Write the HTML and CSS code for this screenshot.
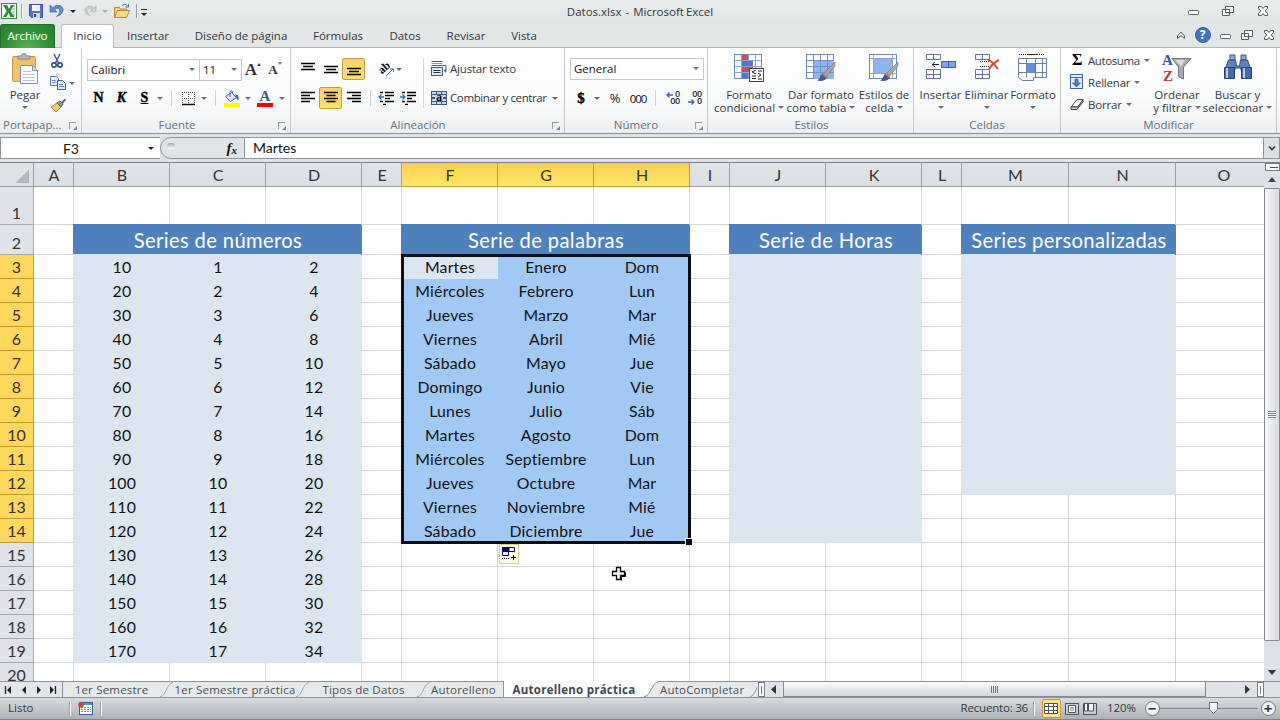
FILE: index.html
```html
<!DOCTYPE html>
<html lang="es">
<head>
    <meta charset="UTF-8">
    <title>Datos.xlsx - Microsoft Excel</title>
    <link rel="stylesheet" href="styles.css">
</head>
<body>
    <div class="window">
        <header class="titlebar">
            <div class="quick">
                <svg width="18" height="18" viewBox="0 0 18 18"><rect x="1.500" y="1.500" width="15" height="15" fill="#f4faf3" stroke="#3d8744"/><path d="M12 4h3M12 7h3M12 10h3M12 13h3" stroke="#7db581"/><path d="M3 3h4l2 4 2-4h3L10.500 9l4 6H10.500L8.500 11l-2 4H3l3.700-6z" fill="#2d8a3a"/></svg>
                <i class="vline"></i>
                <svg width="16" height="16" viewBox="0 0 16 16"><path d="M1.500 1.500h13v13h-11l-2-2z" fill="#5a72cf" stroke="#3f4f9c"/><path d="M4 2h8v6H4z" fill="#eef3fb"/><path d="M5 10h7v5H5z" fill="#cfd6e4"/><path d="M6 11h2v3H6z" fill="#2f3e85"/></svg>
                <svg width="16" height="16" viewBox="0 0 16 16"><path d="M1 2v7h7L5.800 6.700C8 4.500 11 5 10.800 8c-.2 2.500-1.800 4-3.300 5.500C11 12.500 14 10.500 14 7 14 2.500 8 .5 3.800 4.600z" fill="#5f8fd0" stroke="#3c67ad" stroke-width=".7"/></svg>
                <i class="arrow dark"></i>
                <svg width="14" height="14" viewBox="0 0 16 16"><path d="M15 2v7H8l2.200-2.300C8 4.500 5 5 5.200 8c.2 2.500 1.800 4 3.300 5.500C5 12.500 2 10.500 2 7c0-4.500 6-6.500 10.200-2.400z" fill="#c8ccd0" stroke="#b1b6bb" stroke-width=".7"/></svg>
                <i class="arrow pale"></i>
                <svg width="18" height="16" viewBox="0 0 18 16"><path d="M1.500 14.500v-10h5l1 1.500h6v3" fill="#f3cf76" stroke="#b78a35"/><path d="M1.500 14.500l3-7h12l-3 7z" fill="#fbdc8b" stroke="#b78a35"/><path d="M9 3c2-2.500 4-2 5.500 0M15.500 1v3h-3" fill="none" stroke="#4472b8"/></svg>
                <i class="vline"></i>
                <span class="customize"><i class="arrow dark"></i></span>
            </div>
            <h1>Datos.xlsx&nbsp; -&nbsp; Microsoft Excel</h1>
            <div class="winbtns top">
                <svg width="12" height="12"><rect x="1.500" y="5.500" width="10" height="4" rx="1" fill="#fff" stroke="#555c64"/></svg>
                <svg width="13" height="12"><path d="M4.500 1.500h8v6h-8zM1.500 4.500h7v6h-7z" fill="#fff" stroke="#555c64"/><path d="M4 7.500h2.500" stroke="#555c64"/></svg>
                <svg width="12" height="12"><path d="M1.500 1.500h3L6 3.500l1.500-2h3v2L8.200 6l2.300 2.500v2h-3L6 8.500l-1.500 2h-3v-2L3.800 6 1.500 3.500z" fill="#fff" stroke="#555c64"/></svg>
            </div>
        </header>

        <nav class="tabs">
            <span class="tab file">Archivo</span>
            <span class="tab active">Inicio</span>
            <span class="tab">Insertar</span>
            <span class="tab">Diseño de página</span>
            <span class="tab">Fórmulas</span>
            <span class="tab">Datos</span>
            <span class="tab">Revisar</span>
            <span class="tab">Vista</span>
            <div class="winbtns">
                <svg width="10" height="10"><path d="M1.500 6L5 2l3.500 4v2.500L5 5.500 1.500 8.500z" fill="#fff" stroke="#555c64"/></svg>
                <span class="help">?</span>
                <svg width="12" height="12"><rect x="1.500" y="5.500" width="10" height="4" rx="1" fill="#fff" stroke="#555c64"/></svg>
                <svg width="13" height="12"><path d="M4.500 1.500h8v6h-8zM1.500 4.500h7v6h-7z" fill="#fff" stroke="#555c64"/><path d="M4 7.500h2.500" stroke="#555c64"/></svg>
                <svg width="12" height="12"><path d="M1.500 1.500h3L6 3.500l1.500-2h3v2L8.200 6l2.300 2.500v2h-3L6 8.500l-1.500 2h-3v-2L3.800 6 1.500 3.500z" fill="#fff" stroke="#555c64"/></svg>
            </div>
        </nav>

        <div class="ribbon">
            <section class="group clipboard">
                <div class="tools">
                    <div class="big">
                        <svg width="28" height="32" viewBox="0 0 28 32"><rect x="1.500" y="3.500" width="23" height="25" rx="1" fill="#f1c26c" stroke="#c9984a"/><path d="M7 6V3h3.500a2.500 2.500 0 0 1 5 0H19v3z" fill="#b7bcc4" stroke="#7c838d"/><path d="M9.500 12.500h12l5 5v13h-17z" fill="#fafcff" stroke="#7d8db5"/><path d="M21.500 12.500v5h5" fill="#d5def0" stroke="#7d8db5"/><path d="M12 18.500h8M12 21.500h12M12 24.500h12M12 27.500h12" stroke="#b7c5e3"/></svg>
                        <span>Pegar</span>
                        <i class="arrow"></i>
                    </div>
                    <div class="clip-col">
                        <svg width="14" height="16" viewBox="0 0 14 16"><path d="M4 1l4.500 9M10 1L5.500 10" stroke="#48608f" stroke-width="1.600"/><circle cx="4" cy="12" r="2.200" fill="none" stroke="#2d4f9e" stroke-width="1.700"/><circle cx="10" cy="12" r="2.200" fill="none" stroke="#2d4f9e" stroke-width="1.700"/></svg>
                        <div><svg width="16" height="14" viewBox="0 0 16 14"><path d="M.5.500h6l2 2v7h-8z" fill="#eaf1fc" stroke="#5577b5"/><path d="M2 4.500h4M2 6.500h4" stroke="#6f92cc"/><path d="M7.500 4.500h5l3 3v6h-8z" fill="#dfeafa" stroke="#3a5ea5"/><path d="M9 8.500h4M9 10.500h5" stroke="#5279bd"/></svg><i class="arrow"></i></div>
                        <svg width="17" height="15" viewBox="0 0 17 15"><path d="M1 9l6-4 4 4-5 5z" fill="#f3cb6a" stroke="#b58b34"/><path d="M7 5l3-2 3 3-2 3z" fill="#8a93a8" stroke="#5c657a"/><path d="M11.500 4L15 .8l1 1L13 5.500z" fill="#4a4f74"/></svg>
                    </div>
                </div>
                <footer>Portapap...<i class="launcher"></i></footer>
            </section>

            <section class="group font">
                <div class="tools stack">
                    <div class="row font-top">
                        <span class="combo">Calibri<i class="arrow"></i></span>
                        <span class="combo size">11<i class="arrow"></i></span>
                        <span class="grow">A<i class="up"></i></span>
                        <span class="grow shrink">A<i class="arrow"></i></span>
                    </div>
                    <div class="row font-bottom">
                        <b class="serif">N</b>
                        <b class="serif"><em>K</em></b>
                        <b class="serif"><u>S</u></b>
                        <i class="arrow"></i>
                        <i class="sep"></i>
                        <svg width="15" height="15" viewBox="0 0 15 15"><path d="M1 1.500h13M1 7.500h13M1.500 1v12M7.500 1v12M13.500 1v12" stroke="#555" stroke-dasharray="1 1"/><path d="M1 13.500h13" stroke="#111" stroke-width="1.500"/></svg>
                        <i class="arrow"></i>
                        <i class="sep"></i>
                        <svg width="18" height="17" viewBox="0 0 18 17"><path d="M2.500 6.500l6-4 5 5-6 4z" fill="#dce8f8" stroke="#4b6794"/><path d="M7 7V1.500c1.500-1.300 3-.5 2.500 2" fill="none" stroke="#4b6794"/><path d="M12 4.500c4 0 4 3 3.500 6-1.500-1-2.500-2-2-3z" fill="#3b66b4"/><rect x="1" y="13" width="16" height="4" fill="#ff0"/></svg>
                        <i class="arrow"></i>
                        <span class="fontcolor">A</span>
                        <i class="arrow"></i>
                    </div>
                </div>
                <footer>Fuente<i class="launcher"></i></footer>
            </section>

            <section class="group align">
                <div class="tools stack">
                    <div class="row align-top">
                        <span class="btn"><svg width="14" height="14"><path d="M0 1.500h14M2 4.500h10M0 7.500h14" stroke="#000" stroke-width="1.300"/></svg></span>
                        <span class="btn"><svg width="14" height="14"><path d="M0 4.500h14M2 7.500h10M0 10.500h14" stroke="#000" stroke-width="1.300"/></svg></span>
                        <span class="btn on"><svg width="14" height="14"><path d="M0 6.500h14M2 9.500h10M0 12.500h14" stroke="#000" stroke-width="1.300"/></svg></span>
                        <i></i>
                        <svg class="orient" width="18" height="16" viewBox="0 0 18 16"><text x="0" y="10" transform="rotate(-42 6 8)" class="ab">ab</text><path d="M7 15l7-7M11 8h3.500v3" fill="none" stroke="#667"/></svg>
                        <i class="arrow"></i>
                    </div>
                    <div class="row align-bottom">
                        <span class="btn"><svg width="14" height="14"><path d="M0 1.500h14M0 4.500h9M0 7.500h14M0 10.500h9" stroke="#000" stroke-width="1.300"/></svg></span>
                        <span class="btn on"><svg width="14" height="14"><path d="M0 1.500h14M2.500 4.500h9M0 7.500h14M2.500 10.500h9" stroke="#000" stroke-width="1.300"/></svg></span>
                        <span class="btn"><svg width="14" height="14"><path d="M0 1.500h14M5 4.500h9M0 7.500h14M5 10.500h9" stroke="#000" stroke-width="1.300"/></svg></span>
                        <i class="sep"></i>
                        <svg width="16" height="14"><path d="M2 1.500h3M7 1.500h9M7 4.500h9M7 7.500h5M2 10.500h3M7 10.500h9M5 13.500h3" stroke="#000" stroke-width="1.600"/><path d="M6 6H1M3.500 3.500L1 6l2.500 2.500" fill="none" stroke="#3b66b4" stroke-width="1.300"/></svg>
                        <svg width="16" height="14"><path d="M2 1.500h3M7 1.500h9M7 4.500h9M7 7.500h5M2 10.500h3M7 10.500h9M5 13.500h3" stroke="#000" stroke-width="1.600"/><path d="M0 6h5M2.500 3.500L5 6 2.500 8.500" fill="none" stroke="#3b66b4" stroke-width="1.300"/></svg>
                    </div>
                </div>
                <div class="wrap-col">
                    <div><svg width="17" height="16" viewBox="0 0 17 16"><path d="M.5.500h11M.5 4.500h14.500v6" fill="none" stroke="#4a5a78"/><path d="M.5 2.500h11" stroke="#8d9ab3"/><rect x=".5" y="6.500" width="11" height="8" fill="#dde8f8" stroke="#4a5a78"/><path d="M2.500 9.500h7M2.500 11.500h7" stroke="#333"/><path d="M12.500 9.500l2.500 2.500V7.500z" fill="#3b66b4"/></svg><span>Ajustar texto</span></div>
                    <div><svg width="17" height="15" viewBox="0 0 17 15"><rect x=".5" y=".5" width="15" height="13" fill="#c4d8f3" stroke="#3f5580"/><path d="M.5 3.500h15M.5 10.500h15M5.500.500v3M10.500.500v3M5.500 10.500v3M10.500 10.500v3" stroke="#3f5580"/><path d="M1 7h3M12 7h3" stroke="#223" stroke-width="1.500"/><text x="5.200" y="9.500" class="ab">a</text></svg><span class="merge">Combinar y centrar</span><i class="arrow"></i></div>
                </div>
                <footer>Alineación<i class="launcher"></i></footer>
            </section>

            <section class="group number">
                <div class="tools stack">
                    <div class="row"><span class="combo format">General<i class="arrow"></i></span></div>
                    <div class="row number-bottom">
                        <b class="serif dollar">$</b>
                        <i class="arrow"></i>
                        <span class="pct">%</span>
                        <span class="thousands">000</span>
                        <i class="sep"></i>
                        <span class="decimals">
                            <svg width="7" height="6"><path d="M7 3H1M3.500.500L1 3l2.500 2.500" fill="none" stroke="#3b66b4" stroke-width="1.400"/></svg><span>0</span>
                            <span class="wide">00</span>
                        </span>
                        <span class="decimals">
                            <span class="wide">00</span>
                            <svg width="7" height="6"><path d="M0 3h6M3.500.500L6 3 3.500 5.500" fill="none" stroke="#3b66b4" stroke-width="1.400"/></svg><span>0</span>
                        </span>
                    </div>
                </div>
                <footer>Número<i class="launcher"></i></footer>
            </section>

            <section class="group styles">
                <div class="tools">
                    <div class="big">
                        <svg width="30" height="30" viewBox="0 0 30 30"><rect x=".5" y="1.500" width="27" height="24" fill="#fff" stroke="#6d88bd"/><path d="M7.500 1.500v24M14.500 1.500v24M21.500 1.500v24M.5 7.500h27M.5 13.500h27M.5 19.500h27" stroke="#8ba3d2"/><path d="M8 2h6v5H8zM8 14h11v5H8z" fill="#d8474a"/><path d="M8 8h11v5H8zM8 20h6v5H8z" fill="#4a78cf"/><rect x="15.500" y="15.500" width="14" height="13" fill="#fff" stroke="#444"/><path d="M22 17l-4 2 4 2M18 23h4M18 25.500h4M24 20l3 2-3 2M24 26h4M24 18h4" fill="none" stroke="#222"/></svg>
                        <span>Formato</span>
                        <span>condicional<i class="arrow"></i></span>
                    </div>
                    <div class="big">
                        <svg width="30" height="30" viewBox="0 0 30 30"><rect x=".5" y="1.500" width="27" height="24" fill="#fff" stroke="#6d88bd"/><path d="M8 8h20v18H8z" fill="#8fb4ee"/><path d="M7.500 1.500v24M14.500 1.500v24M21.500 1.500v24M.5 7.500h27M.5 13.500h27M.5 19.500h27" stroke="#7391c9"/><path d="M29 9v4l-9 11-3-3z" fill="#a3a7ae" stroke="#6e737c" stroke-width=".6"/><path d="M17 20l4 4c-1 4-6 4.500-10 3.500 3-1 3-5 6-7.500z" fill="#3a5c9c"/><path d="M17.500 19.500l4 4-1.500 1.500-4-4z" fill="#cf8947"/></svg>
                        <span>Dar formato</span>
                        <span>como tabla<i class="arrow"></i></span>
                    </div>
                    <div class="big">
                        <svg width="30" height="30" viewBox="0 0 30 30"><rect x=".5" y="1.500" width="27" height="24" fill="#fff" stroke="#6d88bd"/><path d="M4.500 1.500v24M23.500 1.500v24M.5 5.500h27M.5 20.500h27" stroke="#8ba3d2"/><path d="M5 6h18v14H5z" fill="#8fb4ee"/><path d="M29 9v4l-9 11-3-3z" fill="#a3a7ae" stroke="#6e737c" stroke-width=".6"/><path d="M17 20l4 4c-1 4-6 4.500-10 3.500 3-1 3-5 6-7.500z" fill="#3a5c9c"/><path d="M17.500 19.500l4 4-1.500 1.500-4-4z" fill="#cf8947"/></svg>
                        <span>Estilos de</span>
                        <span>celda<i class="arrow"></i></span>
                    </div>
                </div>
                <footer>Estilos</footer>
            </section>

            <section class="group cells">
                <div class="tools">
                    <div class="big">
                        <svg width="30" height="30" viewBox="0 0 30 30"><path d="M.5 1.500h14v5H.5zM7.500 1.500v5M.5 16.500h14v9H.5zM7.500 16.500v9M.5 21.500h14" fill="#fff" stroke="#5c7299"/><rect x="15.500" y="8.500" width="14" height="6" fill="#7ba4ea" stroke="#3d62a8"/><path d="M22.500 8.500v6" stroke="#3d62a8"/><path d="M13 11.500H6M9 9l-3 2.500L9 14" fill="none" stroke="#222"/></svg>
                        <span>Insertar</span>
                        <i class="arrow"></i>
                    </div>
                    <div class="big">
                        <svg width="30" height="30" viewBox="0 0 30 30"><path d="M3.500 1.500h14v5h-14zM10.500 1.500v5M3.500 16.500h14v9h-14zM10.500 16.500v9M3.500 21.500h14" fill="#fff" stroke="#5c7299"/><path d="M8 8.500h10M8 13.500h10" stroke="#333" stroke-dasharray="1 1"/><path d="M16 6c3 2 7 6 10 10M27 7c-4 2-8 6-10 9" fill="none" stroke="#d9483c" stroke-width="2"/></svg>
                        <span>Eliminar</span>
                        <i class="arrow"></i>
                    </div>
                    <div class="big">
                        <svg width="30" height="30" viewBox="0 0 30 30"><path d="M1 1.500h26" stroke="#222" stroke-dasharray="1 1"/><path d="M10 1.500h9" stroke="#222"/><path d="M.5 5.500h28v19h-13v3h-11l-4-3zM8.500 5.500v19M17.500 5.500v19M24.500 5.500v19M.5 10.500h28M.5 19.500h28" fill="#f6f9fe" stroke="#6c7f9f"/><rect x="9" y="10" width="8" height="10" fill="#5f8de0"/></svg>
                        <span>Formato</span>
                        <i class="arrow"></i>
                    </div>
                </div>
                <footer>Celdas</footer>
            </section>

            <section class="group edit">
                <div class="tools">
                    <div class="edit-col">
                        <div><b class="sigma">Σ</b><span>Autosuma</span><i class="arrow"></i></div>
                        <div><svg width="14" height="16" viewBox="0 0 14 16"><rect x=".5" y=".5" width="12" height="14" fill="#e3edfb" stroke="#3b66b4"/><path d="M1 3.500h11" stroke="#3b66b4"/><path d="M5 5h3v4h2.500L6.500 13 2.500 9H5z" fill="#4a7ad0" stroke="#2f57a5" stroke-width=".7"/></svg><span>Rellenar</span><i class="arrow"></i></div>
                        <div><svg width="14" height="13" viewBox="0 0 14 13"><path d="M1 9l6-7.500h6L8 9z" fill="#fff" stroke="#444"/><path d="M1 9v2.500h6L13 4V1.500L8 9z" fill="#ccd3dd" stroke="#444"/></svg><span>Borrar</span><i class="arrow"></i></div>
                    </div>
                    <div class="big">
                        <svg class="sort" width="30" height="30" viewBox="0 0 30 30"><path d="M10 5.500h19L21.500 14v12l-5-2.500V14z" fill="#a9adb2" stroke="#73777d"/><path d="M13 7h10l-4 6z" fill="#dcdfe2"/><text x="0" y="12" class="sort-a">A</text><text x="1" y="28" class="sort-z">Z</text></svg>
                        <span>Ordenar</span>
                        <span>y filtrar<i class="arrow"></i></span>
                    </div>
                    <div class="big">
                        <svg width="30" height="30" viewBox="0 0 30 30"><path d="M7 2h5v5H7zM18 2h5v5h-5z" fill="#92abd3" stroke="#3d5788"/><path d="M5.500 7h7l1 6h3l1-6h7l2.500 7v3h-9v-2h-6v2h-9v-3z" fill="#5f82bd" stroke="#314c80"/><path d="M1.500 14.500h10v11h-10zM18.500 14.500h10v11h-10z" fill="#4569ab" stroke="#27417a"/><path d="M4 15v10M21 15v10" stroke="#b7caea" stroke-width="2"/></svg>
                        <span>Buscar y</span>
                        <span>seleccionar<i class="arrow"></i></span>
                    </div>
                </div>
                <footer>Modificar</footer>
            </section>
        </div>

        <div class="formula-bar">
            <div class="name-box"><span>F3</span><i class="arrow dark"></i></div>
            <div class="fx"><i class="knob"></i><span><em>f</em><sub>x</sub></span></div>
            <div class="formula">Martes</div>
            <div class="expand"><svg width="8" height="7"><path d="M1 1.500l3 3 3-3" fill="none" stroke="#333" stroke-width="1.600"/></svg></div>
        </div>

        <main class="work">
            <div class="sheet" id="sheet">
                <div class="selection"></div>
                <div class="paste-tag"><svg width="15" height="15"><path d="M1 1h7v5H1z" fill="#000080"/><path d="M8 1.500h5.500v4H8zM1.500 5.500h6v4h-6z" fill="#fff" stroke="#000080"/><path d="M1 12.500h8" stroke="#000" stroke-dasharray="1 1"/><path d="M10 11.500h5M12.500 9v5" stroke="#000"/></svg></div>
                <svg class="cursor" width="16" height="16"><path d="M5.500 1.500h4v4h4v4h-4v4h-4v-4h-4v-4h4z" fill="#fff" stroke="#000" stroke-width="1.300"/><path d="M10.500 14.500v-4h4v-4" fill="none" stroke="#000"/></svg>
            </div>
            <div class="vscroll">
                <div class="split"></div>
                <div class="end"><i class="up"></i></div>
                <div class="thumb"><i class="grip"></i></div>
                <div class="track"></div>
                <div class="end"><i class="arrow"></i></div>
            </div>
        </main>

        <div class="bottom">
            <div class="nav">
                <svg width="9" height="8"><path d="M1.500 0v8" stroke="#222" stroke-width="1.300"/><path d="M7 0v8L3 4z" fill="#222"/></svg>
                <svg width="6" height="8"><path d="M5 0v8L1 4z" fill="#222"/></svg>
                <svg width="6" height="8"><path d="M1 0v8l4-4z" fill="#222"/></svg>
                <svg width="9" height="8"><path d="M6.500 0v8" stroke="#222" stroke-width="1.300"/><path d="M1 0v8l4-4z" fill="#222"/></svg>
            </div>
            <div class="sheet-tabs">
                <span class="s1">1er Semestre</span>
                <svg width="14" height="15"><path d="M0 14.500c3 0 4-2 6-6S9 1.500 13 .5" fill="none" stroke="#9ea4aa"/></svg>
                <span class="s2">1er Semestre práctica</span>
                <svg width="14" height="15"><path d="M0 14.500c3 0 4-2 6-6S9 1.500 13 .5" fill="none" stroke="#9ea4aa"/></svg>
                <span class="s3">Tipos de Datos</span>
                <svg width="14" height="15"><path d="M0 14.500c3 0 4-2 6-6S9 1.500 13 .5" fill="none" stroke="#9ea4aa"/></svg>
                <span class="s4">Autorelleno</span>
                <span class="s5 current">Autorelleno práctica</span>
                <svg class="edge" width="16" height="16"><path d="M0 0h15c-3 1-5 3-7 7s-4 8-8 8z" fill="#fff"/><path d="M0 15.500c3 0 5-3 7.500-7.500S11 1.500 15 .5" fill="none" stroke="#888e95"/></svg>
                <span class="s6">AutoCompletar</span>
                <svg width="8" height="15"><path d="M0 14.500c3 0 5-4 7-9" fill="none" stroke="#888e95"/></svg>
            </div>
            <div class="hscroll">
                <i class="hsplit"></i>
                <div class="hend"><svg width="6" height="9"><path d="M5 0v9L0 4.500z" fill="#333"/></svg></div>
                <div class="hthumb"><i></i><i></i><i></i><i></i></div>
                <div class="htrack"><svg width="6" height="9"><path d="M0 0v9l5-4.500z" fill="#333"/></svg></div>
                <i class="hsplit"></i>
            </div>
        </div>

        <footer class="status">
            <span class="ready">Listo</span>
            <i class="vline"></i>
            <svg width="16" height="15" viewBox="0 0 16 15"><rect x="1.500" y="1.500" width="13" height="12" fill="#fff" stroke="#3b5f9f"/><path d="M2 2h12v2H2z" fill="#5c8ad6"/><path d="M3 6.500h10M3 8.500h10M3 10.500h10" stroke="#6f8cbc" stroke-dasharray="2 1"/><circle cx="3" cy="4" r="2.800" fill="#b5533a"/></svg>
            <i class="vline"></i>
            <span class="count">Recuento: 36</span>
            <i class="vline"></i>
            <span class="view on"><svg width="14" height="12"><path d="M.5.500h13v10H.5zM4.500.500v10M9.500.500v10M.5 3.500h13M.5 7.500h13" fill="#fff" stroke="#4f5256"/></svg></span>
            <span class="view"><svg width="14" height="12"><path d="M.5.500h13v11H.5z" fill="#c9cdd1" stroke="#4f5256"/><path d="M3.500 2.500h7v7h-7z" fill="#fff" stroke="#4f5256"/><path d="M5 5h4M5 7h4" stroke="#777"/></svg></span>
            <span class="view"><svg width="14" height="12"><path d="M.5.500h13v11H.5z" fill="#c9cdd1" stroke="#4f5256"/><path d="M1.500 1v7h3V1M5.500 1v7h5V1" fill="#fff" stroke="#4f5256"/></svg></span>
            <span class="zoom">120%</span>
            <span class="round">−</span>
            <span class="slider"><svg width="9" height="12"><path d="M.5.500h8v7l-4 4-4-4z" fill="#f5f7f9" stroke="#6b7178"/></svg></span>
            <span class="round">+</span>
        </footer>
    </div>

    <script>
        const letters = 'ABCDEFGHIJKLMNO'.split('');
        const dias = ['Martes', 'Miércoles', 'Jueves', 'Viernes', 'Sábado', 'Domingo', 'Lunes', 'Martes', 'Miércoles', 'Jueves', 'Viernes', 'Sábado'];
        const meses = ['Enero', 'Febrero', 'Marzo', 'Abril', 'Mayo', 'Junio', 'Julio', 'Agosto', 'Septiembre', 'Octubre', 'Noviembre', 'Diciembre'];
        const cortos = ['Dom', 'Lun', 'Mar', 'Mié', 'Jue', 'Vie', 'Sáb', 'Dom', 'Lun', 'Mar', 'Mié', 'Jue'];
        const titles = {
            B: ['Series de números', 3],
            F: ['Serie de palabras', 3],
            J: ['Serie de Horas', 2],
            M: ['Series personalizadas', 2]
        };
        const sheet = document.getElementById('sheet');

        function add(text, cls, span) {
            const el = document.createElement('div');
            el.className = cls;
            el.textContent = text;
            if (span) el.style.gridColumn = 'span ' + span;
            sheet.appendChild(el);
        }

        function value(col, i) {
            if (i < 0) return '';
            switch (col) {
                case 'B': return (i + 1) * 10;
                case 'C': return i + 1;
                case 'D': return (i + 1) * 2;
                case 'F': return dias[i] || '';
                case 'G': return meses[i] || '';
                case 'H': return cortos[i] || '';
            }
            return '';
        }

        function style(col, row) {
            if (row < 3) return '';
            if ('BCD'.includes(col) && row <= 19) return ' fill';
            if ('FGH'.includes(col) && row <= 14) return col === 'F' && row === 3 ? ' fill' : ' picked';
            if ('JK'.includes(col) && row <= 14) return ' fill';
            if ('MN'.includes(col) && row <= 12) return ' fill';
            return '';
        }

        // encabezados de columna
        add('', 'head corner');
        letters.forEach(l => add(l, 'head' + ('FGH'.includes(l) ? ' lit' : '')));

        // filas
        for (let row = 1; row <= 20; row++) {
            add(row, 'num' + (row >= 3 && row <= 14 ? ' lit' : ''));
            for (let c = 0; c < letters.length; c++) {
                const col = letters[c];
                if (row === 2 && titles[col]) {
                    add(titles[col][0], 'cell title', titles[col][1]);
                    c += titles[col][1] - 1;
                    continue;
                }
                const s = style(col, row);
                add(s ? value(col, row - 3) : '', 'cell' + s);
            }
        }
    </script>
</body>
</html>
```
FILE: styles.css
```css
* {
    box-sizing: border-box;
}

body {
    margin: 0;
    overflow: hidden;
    font-family: "Open Sans", "Noto Sans", sans-serif;
    font-size: 11.5px;
    color: #33383e;
}

svg {
    display: block;
    flex: none;
}

.window {
    width: 1280px;
    height: 720px;
    display: flex;
    flex-direction: column;
    background: #e2e6e7;
}

.arrow,
.up {
    display: block;
    flex: none;
    width: 0;
    height: 0;
    border: 3px solid transparent;
    border-top-color: #6a6f75;
    border-bottom: 0;
}

.up {
    border: 3px solid transparent;
    border-bottom-color: #444;
    border-top: 0;
}

.arrow.dark {
    border-top-color: #222;
}

.arrow.pale {
    border-top-color: #aaafb4;
}

.vline {
    width: 2px;
    height: 14px;
    border-left: 1px solid #9da3a8;
    border-right: 1px solid #f7f9fa;
}

/* barra de titulo */
.titlebar {
    height: 24px;
    display: grid;
    grid-template-columns: 500px 280px 1fr;
    background: linear-gradient(#e9eced, #e2e5e6);
}

.quick {
    display: grid;
    grid-template-columns: 18px 8px 20px 22px 9px 25px 6px 27px 4px 10px;
    align-items: center;
    justify-items: center;
    height: 22px;
}

.customize {
    border-top: 1px solid #222;
    padding-top: 3px;
    margin-top: 3px;
}

.titlebar h1 {
    margin: 0;
    font-size: 11.5px;
    font-weight: 400;
    line-height: 24px;
    text-align: center;
    word-spacing: -1px;
}

.winbtns {
    display: grid;
    grid-template-columns: 20px 23px 22px 21px 23px;
    place-items: center;
    height: 22px;
}

.winbtns.top {
    grid-template-columns: 35px 35px 35px;
    justify-content: end;
}

.help {
    width: 16px;
    height: 16px;
    border-radius: 50%;
    background: #3f76c4;
    border: 1px solid #2e5ca3;
    color: #fff;
    font-weight: 700;
    font-size: 12px;
    line-height: 14px;
    text-align: center;
}

/* pestañas */
.tabs {
    height: 24px;
    display: grid;
    grid-template-columns: 55px 64px 64px 116px 78px 56px 66px 50px 1fr;
    border-bottom: 1px solid #b3b8bc;
}

.tab {
    line-height: 24px;
    text-align: center;
}

.tab.file {
    background: radial-gradient(ellipse at 50% 110%, #5db74f, #2f8f37 60%, #23802e);
    color: #fff;
    border: 1px solid #1f6b29;
    border-bottom: 0;
    border-radius: 3px 3px 0 0;
    line-height: 22px;
    height: 24px;
}

.tab.active {
    width: 53px;
    height: 24px;
    margin-left: 6px;
    background: #fff;
    border: 1px solid #b9bec3;
    border-bottom: 0;
    border-radius: 3px 3px 0 0;
    line-height: 22px;
}

.tab:nth-child(3) {
    margin-left: -6px;
}

.tabs .winbtns {
    justify-content: end;
}

/* cinta de opciones */
.ribbon {
    height: 86px;
    display: grid;
    grid-template-columns: 82px 209px 274px 143px 206px 147px 216px;
    background: linear-gradient(#fff, #fafbfc 60%, #eceff1);
    border-bottom: 1px solid #8b9197;
}

.group {
    position: relative;
    display: grid;
    grid-template-columns: auto 1fr;
    grid-template-rows: 69px 16px;
    border-right: 1px solid #c3c8cc;
}

.group footer {
    grid-column: 1 / -1;
    line-height: 16px;
    text-align: center;
    color: #697079;
}

.clipboard footer {
    text-align: left;
    padding-left: 3px;
}

.font footer {
    padding-right: 18px;
}

.align footer {
    padding-right: 19px;
}

.launcher {
    position: absolute;
    right: 5px;
    bottom: 4px;
    width: 7px;
    height: 7px;
    border: 1px solid #969ca3;
    border-right: 0;
    border-bottom: 0;
}

.launcher::after {
    content: "";
    position: absolute;
    right: -1px;
    bottom: -1px;
    border: 2px solid transparent;
    border-right-color: #7b8289;
    border-bottom-color: #7b8289;
}

.tools {
    display: flex;
}

.tools.stack {
    display: block;
    padding: 10px 0 0 5px;
}

.big {
    display: flex;
    flex-direction: column;
    align-items: center;
    padding-top: 5px;
    white-space: nowrap;
}

.big svg {
    margin-bottom: 5px;
}

.big span {
    display: flex;
    align-items: center;
    line-height: 13px;
    height: 13px;
}

.big span .arrow {
    margin-left: 3px;
}

.big > .arrow {
    margin-top: 5px;
}

.clipboard .big {
    width: 50px;
}

.clipboard .big svg {
    margin-bottom: 3px;
}

.clip-col {
    display: grid;
    grid-template-rows: repeat(3, 22px);
    justify-items: start;
    align-items: center;
    padding-top: 2px;
}

.clip-col div {
    display: flex;
    align-items: center;
    gap: 3px;
}

.styles .tools {
    display: grid;
    grid-template-columns: 80px 64px 62px;
    padding-left: 1px;
}

.cells .tools {
    display: grid;
    grid-template-columns: 49px 43px 50px;
    padding-left: 2px;
}

.row {
    display: grid;
    align-items: center;
    height: 22px;
}

.row + .row {
    margin-top: 7px;
}

.sep {
    width: 1px;
    height: 16px;
    background: #cdd1d5;
}

.combo {
    display: flex;
    align-items: center;
    justify-content: space-between;
    height: 22px;
    padding: 0 4px 2px 3px;
    background: #fff;
    border: 1px solid #c5c9cd;
    color: #111;
}

.combo.size {
    border-left: 0;
}

.combo.format {
    width: 134px;
}

.font-top {
    grid-template-columns: 113px 42px 22px 22px;
}

.font-bottom {
    grid-template-columns: 23px 23px 23px 8px 14px 20px 12px 10px 24px 7px 28px 5px;
    justify-items: center;
}

.serif {
    font-family: "Liberation Serif", serif;
    font-size: 14px;
    color: #000;
    -webkit-text-stroke: .4px #000;
}

.grow {
    display: flex;
    justify-content: center;
    font: bold 17px/22px "Liberation Serif", serif;
    color: #333;
}

.grow .up,
.grow .arrow {
    margin-top: 4px;
    border-width: 0 2.500px 3px;
    border-bottom-color: #345;
}

.grow.shrink {
    font-size: 13px;
    line-height: 24px;
}

.grow .arrow {
    border-width: 3px 2.500px 0;
}

.fontcolor {
    width: 16px;
    height: 17px;
    border-bottom: 4px solid #f00;
    font: bold 15px/13px "Liberation Serif", serif;
    text-align: center;
    color: #3c5a8c;
}

.btn {
    display: grid;
    place-items: center;
    width: 23px;
    height: 22px;
}

.btn.on {
    background: linear-gradient(#fbd469, #ffe074);
    border: 1px solid #c79c3e;
    border-radius: 2px;
}

.align-top {
    grid-template-columns: 23px 23px 23px 14px 17px 8px;
}

.align-bottom {
    grid-template-columns: 23px 23px 23px 13px 22px 21px;
}

.align-bottom .sep {
    margin-left: 5px;
}

.orient,
.sort {
    overflow: visible;
}

.ab {
    font: bold 11.5px "Liberation Serif", serif;
}

.wrap-col {
    margin: 10px 0 0 7px;
    height: 50px;
    border-left: 1px solid #d5d9dc;
    padding-left: 7px;
}

.align {
    grid-template-columns: 125px 1fr;
}

.wrap-col div {
    display: flex;
    align-items: center;
    height: 22px;
    margin-bottom: 7px;
    white-space: nowrap;
}

.wrap-col span {
    margin-left: 2px;
    padding-bottom: 2px;
    letter-spacing: -.2px;
}

.wrap-col .merge {
    letter-spacing: -.38px;
}

.wrap-col .arrow {
    margin-left: 5px;
}

.number-bottom {
    grid-template-columns: 22px 10px 26px 20px 14px 22px 22px;
    justify-items: center;
}

.dollar {
    font-size: 15px;
}

.pct {
    font-size: 13px;
    color: #222;
}

.thousands {
    font-size: 11.5px;
    letter-spacing: -1px;
    color: #111;
}

/* botones de decimales */
.decimals {
    display: grid;
    grid-template-columns: 9px 5px;
    grid-template-rows: 7px 7px;
    align-items: center;
    font-family: "Liberation Sans", sans-serif;
    font-size: 8.500px;
    line-height: 7px;
    color: #111;
    -webkit-text-stroke: .2px #111;
}

.decimals span {
    text-align: right;
}

.decimals .wide {
    grid-column: 1 / -1;
}

.edit .tools {
    display: grid;
    grid-template-columns: 86px 60px 60px;
}

.edit .big:last-child {
    margin-left: 1px;
}

.edit-col {
    display: grid;
    grid-template-rows: repeat(3, 22px);
    padding: 2px 0 0 9px;
}

.edit-col div {
    display: grid;
    grid-template-columns: 14px auto auto;
    justify-content: start;
    align-items: center;
    column-gap: 4px;
    padding-bottom: 2px;
    letter-spacing: -.2px;
}

.edit-col div:first-child {
    letter-spacing: -.4px;
}

.sigma {
    font: bold 16px "Liberation Serif", serif;
    text-align: center;
    color: #000;
}

.sort-a,
.sort-z {
    font: bold 15px "Liberation Serif", serif;
    fill: #3457a6;
}

.sort-z {
    fill: #b3373b;
}

/* barra de formulas */
.formula-bar {
    height: 28px;
    display: grid;
    grid-template-columns: 160px 85px 1fr 17px;
    padding: 3px 0;
    background: #dfe3e6;
    font-family: Lato, sans-serif;
    font-size: 14px;
    color: #111;
}

.formula-bar > div {
    border-top: 1px solid #8d9399;
    border-bottom: 1px solid #8d9399;
    background: #fff;
}

.name-box {
    display: flex;
    align-items: center;
    justify-content: flex-end;
    padding-right: 6px;
    border-left: 1px solid #8d9399;
}

.name-box span {
    margin-right: 69px;
}

.formula-bar .fx {
    display: flex;
    align-items: center;
    justify-content: space-between;
    padding: 0 7px 0 6px;
    background: #e0e4e8;
    border-left: 1px solid #8d9399;
    border-right: 1px solid #8d9399;
    border-radius: 11px 0 0 11px;
}

.fx span {
    font: bold 15px/18px "Liberation Serif", serif;
}

.fx sub {
    font: italic bold 11px/1 "Liberation Serif", serif;
    vertical-align: -1px;
}

.knob {
    width: 8px;
    height: 6px;
    border-radius: 4px;
    background: linear-gradient(#a6abb1, #fff);
    margin-top: -4px;
}

.formula {
    padding-left: 8px;
    line-height: 20px;
}

.formula-bar .expand {
    display: grid;
    place-items: center;
    background: #dde1e6;
    border-left: 1px solid #8d9399;
    border-right: 1px solid #8d9399;
}

/* hoja */
.work {
    height: 519px;
    display: grid;
    grid-template-columns: 1264px 16px;
    border-top: 1px solid #7c8289;
}

.sheet {
    position: relative;
    display: grid;
    grid-template-columns: 34px 40px 96px 96px 96px 40px 96px 96px 96px 40px 96px 96px 40px 107px 107px 96px;
    grid-template-rows: 24px 38px 30px repeat(18, 24px);
    height: 518px;
    overflow: hidden;
    background: #fff;
    font-family: Lato, sans-serif;
    font-size: 15.8px;
    font-variant-ligatures: none;
    color: #111;
}

.head,
.num,
.cell {
    text-align: center;
    border-right: 1px solid #d3d6da;
    border-bottom: 1px solid #d3d6da;
    white-space: nowrap;
}

.head {
    background: linear-gradient(#e0e3e8, #dcdfe5);
    border-color: #9a9fa6;
    color: #333;
    font-size: 16px;
    line-height: 24px;
    padding-left: 1px;
}

.corner {
    background: linear-gradient(135deg, transparent 50%, #b3b7bc 50%) 16px 7px / 13px 13px no-repeat, #dfe2e7;
}

.num {
    display: flex;
    align-items: flex-end;
    justify-content: center;
    background: #dfe2e8;
    border-color: #a5aab1;
    color: #333;
    font-size: 16px;
    line-height: 22px;
}

.head.lit {
    background: linear-gradient(#fcd053, #ffe667);
    border-color: #c29a35;
}

.num.lit {
    background: #ffd75d;
    border-color: #c29a35;
}

.cell {
    line-height: 24px;
    letter-spacing: .22px;
    padding-left: 1px;
}

.cell.fill {
    background: #dce6f0;
    border-color: #dce6f0;
    box-shadow: -1px -1px 0 #dce6f0;
}

.cell.picked {
    background: #a1c9f4;
    border-color: #a1c9f4;
}

.cell.title {
    background: #4f81bd;
    border-color: #4f81bd;
    box-shadow: -1px -1px 0 #4f81bd;
    color: #fff;
    font-size: 20.2px;
    letter-spacing: .35px;
    line-height: 31px;
}

.selection {
    position: absolute;
    left: 401px;
    top: 91px;
    width: 290px;
    height: 290px;
    border: 3px solid #0b0f14;
}

.selection::after {
    content: "";
    position: absolute;
    right: -4px;
    bottom: -4px;
    width: 6px;
    height: 6px;
    background: #000;
    border: solid #fff;
    border-width: 1px 0 0 1px;
}

.paste-tag {
    position: absolute;
    left: 499px;
    top: 381px;
    width: 20px;
    height: 20px;
    padding: 1px;
    background: #fdfbe6;
    border: 1px solid #d8d193;
}

.cursor {
    position: absolute;
    left: 611px;
    top: 403px;
}

.vscroll {
    display: flex;
    flex-direction: column;
    background: #dde1e8;
}

.split {
    height: 8px;
    margin: 0 0 0 1px;
    background: linear-gradient(#555, #555) 4px 3px / 8px 1px no-repeat, #fff;
    border: 1px solid #777d84;
}

.end {
    height: 17px;
    display: grid;
    place-items: center;
}

.end .up,
.end .arrow {
    border-width: 0 4px 5px;
}

.end .arrow {
    border-width: 5px 4px 0;
    border-top-color: #333;
}

.thumb {
    height: 453px;
    display: grid;
    place-items: center;
    border: 1px solid #858b92;
    border-radius: 1px;
    background: linear-gradient(90deg, #f7f8f9, #d6dade);
}

.grip {
    width: 8px;
    height: 7px;
    background: repeating-linear-gradient(#7b8188 0 1px, #fff 1px 2px);
}

.track {
    flex: 1;
}

/* etiquetas de hojas */
.bottom {
    height: 16px;
    display: grid;
    grid-template-columns: 63px 695px 522px;
    background: #dfe3e7;
}

.nav {
    display: grid;
    grid-template-columns: 17px 14px 15px 15px;
    place-items: center;
    border-top: 1px solid #8d9399;
    border-right: 1px solid #8d9399;
    background: #e3e7ea;
}

.sheet-tabs {
    display: grid;
    grid-template-columns: 97px 14px 122px 14px 107px 14px 73px 140px 16px 90px 8px;
    border-top: 1px solid #8d9399;
    background: #e6e9ea;
    color: #4a5057;
    letter-spacing: .2px;
}

.sheet-tabs span {
    line-height: 15px;
    height: 15px;
    text-align: center;
    white-space: nowrap;
}

.sheet-tabs .s4 {
    border-right: 1px solid #8d9399;
    padding-right: 10px;
}

.sheet-tabs .current,
.sheet-tabs .edge {
    margin-top: -1px;
    height: 16px;
}

.sheet-tabs .current {
    background: #fff;
    font-weight: 700;
    line-height: 17px;
    letter-spacing: .25px;
    color: #41474e;
}

.sheet-tabs .s6 {
    padding-right: 6px;
}

.hscroll {
    display: grid;
    grid-template-columns: 7px 18px 423px 51px 7px;
    border-top: 1px solid #8d9399;
}

.hsplit {
    background: linear-gradient(#777, #777) 50% 50% / 1px 8px no-repeat, #fff;
    border: 1px solid #777d84;
}

.hend,
.htrack {
    display: grid;
    place-items: center;
}

.htrack {
    justify-content: end;
    padding-right: 6px;
}

.hthumb {
    display: flex;
    align-items: center;
    justify-content: center;
    gap: 1px;
    border: 1px solid #858b92;
    border-top: 0;
    background: linear-gradient(#f8f9fa, #d4d8dc);
}

.hthumb i {
    width: 1px;
    height: 7px;
    background: #6f757c;
}

/* barra de estado */
.status {
    height: 23px;
    display: grid;
    grid-template-columns: 68px 4px 27px 4px 926px 10px 24px 17px 19px 45px 16px 98px 20px;
    align-items: center;
    justify-items: center;
    background: linear-gradient(#d9dcdf, #c3c7cb 50%, #adb2b7);
    border-top: 1px solid #8a9096;
    border-bottom: 1px solid #7f858b;
}

.status span {
    margin-top: -2px;
}

.ready {
    justify-self: start;
    padding-left: 8px;
}

.count {
    justify-self: end;
    padding-right: 1px;
    letter-spacing: -.2px;
}

.status .view {
    display: grid;
    place-items: center;
    width: 19px;
    height: 19px;
    margin: 0;
}

.view.on {
    background: #ffe28a;
    border: 1px solid #c8962c;
    border-radius: 2px;
}

.status .round {
    width: 15px;
    height: 15px;
    margin: 0;
    border: 1px solid #70767d;
    border-radius: 50%;
    background: #eff1f3;
    font-size: 15px;
    font-weight: 700;
    line-height: 12px;
    text-align: center;
}

.slider {
    width: 100%;
    height: 12px;
    padding-left: 49px;
    background: linear-gradient(#7b8188, #7b8188) 0 6px / 100% 1px no-repeat;
}
```
